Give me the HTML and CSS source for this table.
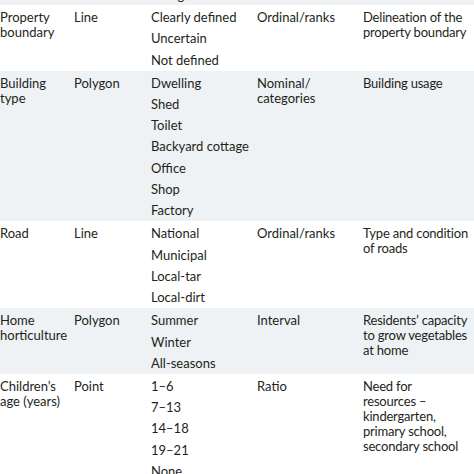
FILE: index.html
```html
<!DOCTYPE html>
<html>
<head>
<meta charset="utf-8">
<link rel="stylesheet" href="styles.css">
</head>
<body>
<div class="table">
  <div class="row shade top">
    <div class="c1"></div><div class="c2"></div>
    <div class="c3"><span class="cut">Categories</span></div>
    <div class="c4"></div><div class="c5"></div>
  </div>
  <div class="row">
    <div class="c1">Property boundary</div>
    <div class="c2">Line</div>
    <div class="c3 opts"><span>Clearly defined</span><span>Uncertain</span><span>Not defined</span></div>
    <div class="c4">Ordinal/ranks</div>
    <div class="c5">Delineation of the property boundary</div>
  </div>
  <div class="row shade">
    <div class="c1">Building type</div>
    <div class="c2">Polygon</div>
    <div class="c3 opts"><span>Dwelling</span><span>Shed</span><span>Toilet</span><span>Backyard cottage</span><span>Office</span><span>Shop</span><span>Factory</span></div>
    <div class="c4">Nominal/ categories</div>
    <div class="c5">Building usage</div>
  </div>
  <div class="row">
    <div class="c1">Road</div>
    <div class="c2">Line</div>
    <div class="c3 opts"><span>National</span><span>Municipal</span><span>Local-tar</span><span>Local-dirt</span></div>
    <div class="c4">Ordinal/ranks</div>
    <div class="c5">Type and condition of roads</div>
  </div>
  <div class="row shade">
    <div class="c1">Home horticulture</div>
    <div class="c2">Polygon</div>
    <div class="c3 opts"><span>Summer</span><span>Winter</span><span>All-seasons</span></div>
    <div class="c4">Interval</div>
    <div class="c5">Residents’ capacity to grow vegetables at home</div>
  </div>
  <div class="row">
    <div class="c1">Children’s age (years)</div>
    <div class="c2">Point</div>
    <div class="c3 opts"><span>1–6</span><span>7–13</span><span>14–18</span><span>19–21</span><span>None</span></div>
    <div class="c4">Ratio</div>
    <div class="c5">Need for<br>resources –<br>kindergarten,<br>primary school,<br>secondary school</div>
  </div>
</div>
</body>
</html>
```

FILE: styles.css
```css
html, body {
  margin: 0;
  padding: 0;
  background: #ffffff;
}
body {
  width: 474px;
  height: 474px;
  overflow: hidden;
  font-family: "Lato", "Liberation Sans", sans-serif;
  font-size: 13px;
  line-height: 15px;
  color: #231f20;
}
.table {
  display: flex;
  flex-direction: column;
}
.row {
  display: grid;
  grid-template-columns: 74px 77px 106px 106px 111px;
  padding: 5px 0 3px 0;
}
.row.shade {
  background: #eef2f4;
}
.row.top {
  height: 5px;
  padding: 0;
  overflow: hidden;
}
.cut {
  display: block;
  margin-top: -12px;
  color: #231f20;
}
.opts {
  display: flex;
  flex-direction: column;
  gap: 6.3px;
}
.opts span {
  white-space: nowrap;
}
.c5 {
  letter-spacing: -0.2px;
}
```
